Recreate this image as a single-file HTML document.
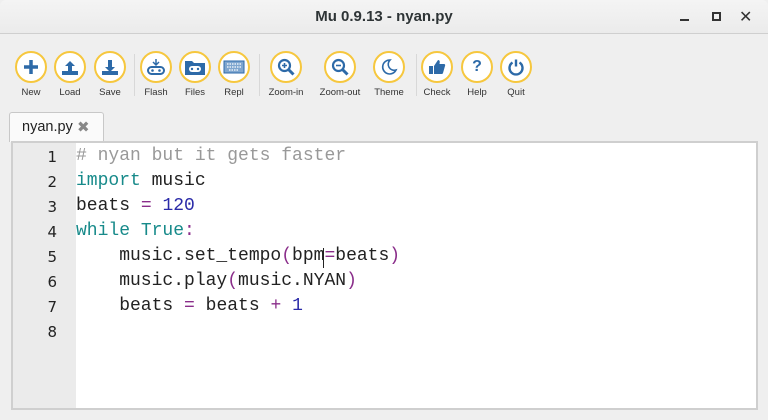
<!DOCTYPE html>
<html><head><meta charset="utf-8"><style>
*{margin:0;padding:0;box-sizing:border-box}
body{width:768px;height:420px;background:#efefef;font-family:"Liberation Sans","DejaVu Sans",sans-serif;position:relative;overflow:hidden}
.title{position:absolute;left:0;top:0;width:768px;height:34px;background:linear-gradient(#f4f4f4,#ebebeb);border-bottom:1px solid #cfcfcf;border-radius:6px 6px 0 0}
.title .t{position:absolute;left:0;right:0;top:8px;text-align:center;font-size:15px;font-weight:bold;color:#2e3436}
.btn{position:absolute;width:32px;height:32px;border-radius:50%;border:2.5px solid #f6c73e;background:#fff;display:flex;align-items:center;justify-content:center}
.lbl{position:absolute;font-size:9.5px;color:#333;width:70px;text-align:center;top:87px}
.sep{position:absolute;top:54px;width:1px;height:42px;background:#d8d8d8}
.tab{position:absolute;left:9px;top:112px;width:95px;height:30px;background:#fafafa;border:1px solid #c8c8c8;border-bottom:none;border-radius:3px 3px 0 0}
.tab span{position:absolute;left:12px;top:6px;font-size:14.5px;color:#222}
.tab b{position:absolute;left:67px;top:5px;font-size:15px;color:#888}
.ed{position:absolute;left:11px;top:141px;width:747px;height:269px;background:#fff;border:2px solid #cfcfcf}
.gut{position:absolute;left:0;top:0;width:63px;height:100%;background:#ebebeb}
.ln{position:absolute;left:0;width:44px;text-align:right;font-family:"DejaVu Sans",sans-serif;font-size:15px;color:#222}
.code{position:absolute;left:63px;font-family:"Liberation Mono","DejaVu Sans Mono",monospace;font-size:18px;color:#222;white-space:pre}
.c{color:#999}.k{color:#178a8a}.n{color:#2a2aa8}.o{color:#8a2d8a}
</style></head><body>
<div class="title"><div class="t">Mu 0.9.13 - nyan.py</div>
<div style="position:absolute;left:680px;top:19px;width:9px;height:2px;background:#333"></div>
<div style="position:absolute;left:712px;top:12px;width:9px;height:9px;border:2px solid #333"></div>
<div style="position:absolute;left:739px;top:7px;font-size:16px;font-weight:bold;color:#333">✕</div>
</div>

<div class="btn" style="left:15px;top:51px"><svg width="18" height="18"><path d="M9 2v14M2 9h14" stroke="#2d6aa8" stroke-width="3.5"/></svg></div>
<div class="btn" style="left:54px;top:51px"><svg width="18" height="18"><path d="M9 3l-5 5h3v5h4v-5h3z" fill="#2d6aa8"/><rect x="1" y="13" width="16" height="4" fill="#2d6aa8"/></svg></div>
<div class="btn" style="left:94px;top:51px"><svg width="18" height="18"><path d="M9 14l-5-5h3V2h4v7h3z" fill="#2d6aa8"/><rect x="1" y="13" width="16" height="4" fill="#2d6aa8"/></svg></div>
<div class="btn" style="left:140px;top:51px"><svg width="20" height="18"><path d="M10 1v6M7 4l3 3 3-3" stroke="#2d6aa8" stroke-width="1.5" fill="none"/><rect x="2" y="9" width="16" height="7" rx="3.5" fill="none" stroke="#2d6aa8" stroke-width="2"/><circle cx="6.5" cy="12.5" r="1.3" fill="#2d6aa8"/><circle cx="13.5" cy="12.5" r="1.3" fill="#2d6aa8"/></svg></div>
<div class="btn" style="left:179px;top:51px"><svg width="22" height="18"><path d="M1 3h7l2 2h11v12H1z" fill="#2d6aa8"/><rect x="5" y="8" width="12" height="6" rx="3" fill="#fff"/><circle cx="8" cy="11" r="1.2" fill="#2d6aa8"/><circle cx="14" cy="11" r="1.2" fill="#2d6aa8"/></svg></div>
<div class="btn" style="left:218px;top:51px"><svg width="22" height="14"><rect x="1" y="1" width="20" height="12" fill="#7fa6cf" stroke="#2d6aa8"/><path d="M4 4h14M4 7h14M6 10h10" stroke="#fff" stroke-width="1.2" stroke-dasharray="1.5 1"/></svg></div>
<div class="btn" style="left:270px;top:51px"><svg width="18" height="18"><circle cx="7.5" cy="7.5" r="5.5" fill="none" stroke="#2d6aa8" stroke-width="2.2"/><path d="M11.5 11.5l5 5" stroke="#2d6aa8" stroke-width="3"/><path d="M7.5 5v5M5 7.5h5" stroke="#2d6aa8" stroke-width="1.6"/></svg></div>
<div class="btn" style="left:324px;top:51px"><svg width="18" height="18"><circle cx="7.5" cy="7.5" r="5.5" fill="none" stroke="#2d6aa8" stroke-width="2.2"/><path d="M11.5 11.5l5 5" stroke="#2d6aa8" stroke-width="3"/><path d="M5 7.5h5" stroke="#2d6aa8" stroke-width="1.6"/></svg></div>
<div class="btn" style="left:373px;top:51px"><svg width="18" height="18"><path d="M10 2a7 7 0 1 0 6 10a6 6 0 0 1 -6 -10z" fill="none" stroke="#2d6aa8" stroke-width="1.6"/></svg></div>
<div class="btn" style="left:421px;top:51px"><svg width="18" height="18"><rect x="1" y="8" width="4" height="8" fill="#2d6aa8"/><path d="M6 8l4-6c2 0 2 2 1.5 4H16c1 0 1.5 1 1 2l-2 7c-.3 1-1 1-2 1H6z" fill="#2d6aa8"/></svg></div>
<div class="btn" style="left:461px;top:51px"><span style="color:#2d6aa8;font-weight:bold;font-size:16px">?</span></div>
<div class="btn" style="left:500px;top:51px"><svg width="18" height="18"><path d="M5.5 4.5a6.5 6.5 0 1 0 7 0" fill="none" stroke="#2d6aa8" stroke-width="2.4"/><path d="M9 1.5v7" stroke="#2d6aa8" stroke-width="2.4"/></svg></div>

<div class="lbl" style="left:-4px">New</div><div class="lbl" style="left:35px">Load</div><div class="lbl" style="left:75px">Save</div>
<div class="lbl" style="left:121px">Flash</div><div class="lbl" style="left:160px">Files</div><div class="lbl" style="left:199px">Repl</div>
<div class="lbl" style="left:251px">Zoom-in</div><div class="lbl" style="left:305px">Zoom-out</div><div class="lbl" style="left:354px">Theme</div>
<div class="lbl" style="left:402px">Check</div><div class="lbl" style="left:442px">Help</div><div class="lbl" style="left:481px">Quit</div>
<div class="sep" style="left:134px"></div><div class="sep" style="left:259px"></div><div class="sep" style="left:416px"></div>

<div class="tab"><span>nyan.py</span><b>✖</b></div>
<div class="ed"><div class="gut"></div>
<div class="ln" style="top:5px">1</div><div class="ln" style="top:30px">2</div><div class="ln" style="top:55px">3</div><div class="ln" style="top:80px">4</div>
<div class="ln" style="top:105px">5</div><div class="ln" style="top:130px">6</div><div class="ln" style="top:155px">7</div><div class="ln" style="top:180px">8</div>
<div class="code" style="top:3px"><span class="c"># nyan but it gets faster</span></div>
<div class="code" style="top:28px"><span class="k">import</span> music</div>
<div class="code" style="top:53px">beats <span class="o">=</span> <span class="n">120</span></div>
<div class="code" style="top:78px"><span class="k">while</span> <span class="k">True</span><span class="o">:</span></div>
<div class="code" style="top:103px">    music.set_tempo<span class="o">(</span>bpm<span class="o">=</span>beats<span class="o">)</span></div>
<div class="code" style="top:128px">    music.play<span class="o">(</span>music.NYAN<span class="o">)</span></div>
<div class="code" style="top:153px">    beats <span class="o">=</span> beats <span class="o">+</span> <span class="n">1</span></div>
<div style="position:absolute;left:310px;top:105px;width:1px;height:20px;background:#222"></div>
</div>
</body></html>
